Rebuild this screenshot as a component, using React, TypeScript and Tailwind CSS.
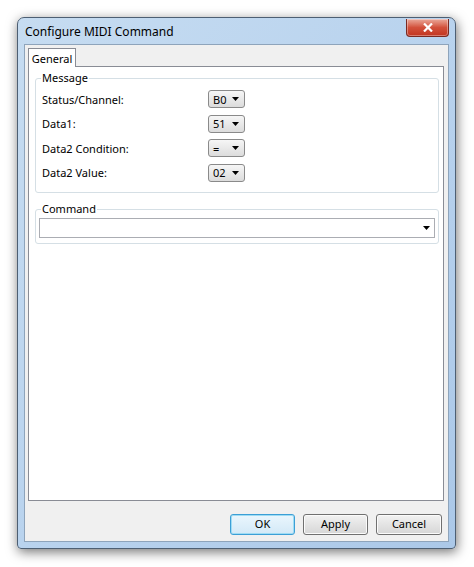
import React from "react";

const font = { fontFamily: '"Noto Sans", "DejaVu Sans", sans-serif' };

const Caret = () => (
  <svg width="7" height="4" viewBox="0 0 7 4" className="shrink-0">
    <path d="M0 0h7L3.5 4z" fill="#000" />
  </svg>
);

const SmallCombo: React.FC<{ value: string }> = ({ value }) => (
  <div className="flex h-[18px] w-[37px] items-center justify-between rounded-[3px] border border-[#8a8a8a] bg-gradient-to-b from-[#f6f6f6] to-[#dcdcdc] pl-[4px] pr-[5px] text-[11px] leading-none text-black">
    <span>{value}</span>
    <Caret />
  </div>
);

const rows = [
  { label: "Status/Channel:", value: "B0" },
  { label: "Data1:", value: "51" },
  { label: "Data2 Condition:", value: "=" },
  { label: "Data2 Value:", value: "02" },
];

const Button: React.FC<{ label: string; primary?: boolean; w: string }> = ({
  label,
  primary,
  w,
}) => (
  <div
    className={`flex h-[21px] items-center justify-center rounded-[3px] border text-[11px] text-black ${w} ${
      primary
        ? "border-[#3c9fd6] bg-gradient-to-b from-[#eaf6fd] to-[#d3e9f7] shadow-[inset_0_0_0_1px_#9fdcf4]"
        : "border-[#707070] bg-gradient-to-b from-[#f2f2f2] to-[#d6d6d6] shadow-[inset_0_0_0_1px_#fbfbfb]"
    }`}
  >
    {label}
  </div>
);

export default function App() {
  return (
    <div className="h-[567px] w-[474px] bg-white pl-[17px] pt-[17px]" style={font}>
      <div className="flex h-[532px] w-[439px] flex-col rounded-t-[7px] rounded-b-[4px] border border-[#4d5f73] bg-gradient-to-br from-[#c6dcf1] via-[#b9d3ee] to-[#abc8e8] shadow-[1px_3px_12px_rgba(0,0,0,0.55)]">
        {/* title bar */}
        <div className="flex h-[26px] shrink-0 items-start justify-between pl-[7px] pr-[6px]">
          <span className="pt-[8px] text-[12px] leading-none text-black">
            Configure MIDI Command
          </span>
          <div className="mt-px flex h-[18px] w-[43px] items-center justify-center rounded-b-[4px] border border-t-0 border-[#7a2a22] bg-gradient-to-b from-[#e9a99c] via-[#d2503b] to-[#c23520] shadow-[inset_0_0_0_1px_rgba(255,255,255,0.35)]">
            <svg width="10" height="9" viewBox="0 0 10 9">
              <path d="M1 0.5l8 8M9 0.5l-8 8" stroke="#fff" strokeWidth="2.2" />
            </svg>
          </div>
        </div>
        {/* client */}
        <div className="mx-[6px] mb-[6px] flex flex-1 flex-col border border-[#8ea4bb] bg-[#f0f0f0]">
          <div className="flex flex-1 flex-col pl-[3px] pr-[4px] pt-[3px]">
            <div className="flex">
              <div className="relative z-10 -mb-px flex h-[19px] w-[48px] items-center justify-center border border-b-0 border-[#898c95] bg-white text-[11px] leading-none text-black">
                General
              </div>
            </div>
            <div className="flex h-[435px] flex-col border border-[#898c95] bg-white px-[6px] pr-[4px] pt-[11px]">
              {/* Message group */}
              <div className="relative h-[115px] rounded-[3px] border border-[#d5dfe5] pl-[6px] pt-[11px]">
                <span className="absolute -top-[8px] left-[5px] bg-white px-px text-[11px] leading-[14px] text-black">
                  Message
                </span>
                <div className="flex flex-col gap-[6.5px]">
                  {rows.map((r) => (
                    <div key={r.label} className="flex h-[18px] items-center">
                      <span className="w-[166px] text-[11px] leading-none text-black">
                        {r.label}
                      </span>
                      <SmallCombo value={r.value} />
                    </div>
                  ))}
                </div>
              </div>
              {/* Command group */}
              <div className="relative mt-[16px] h-[35px] rounded-[3px] border border-[#d5dfe5] px-[3px] pt-[8px]">
                <span className="absolute -top-[8px] left-[5px] bg-white px-px text-[11px] leading-[14px] text-black">
                  Command
                </span>
                <div className="flex h-[20px] items-center justify-end border border-[#abadb3] bg-white pr-[4px]">
                  <Caret />
                </div>
              </div>
            </div>
          </div>
          <div className="flex h-[40px] shrink-0 items-start justify-end gap-[8px] pr-[6px] pt-[13px]">
            <Button label="OK" primary w="w-[65px]" />
            <Button label="Apply" w="w-[65px]" />
            <Button label="Cancel" w="w-[66px]" />
          </div>
        </div>
      </div>
    </div>
  );
}
